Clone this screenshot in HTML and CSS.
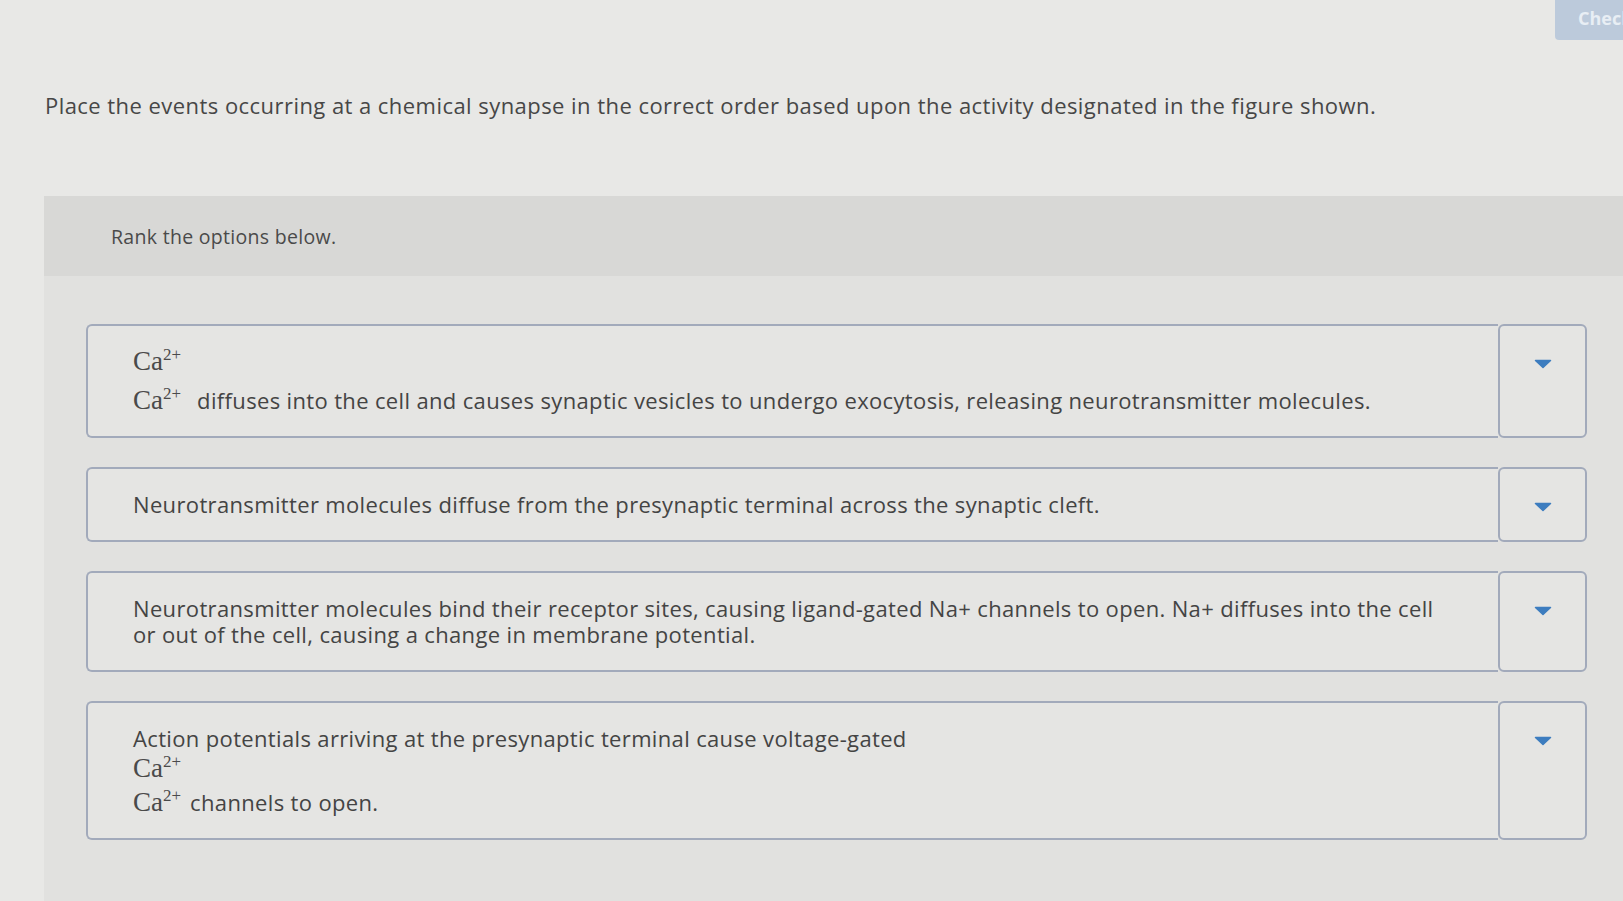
FILE: index.html
```html
<!DOCTYPE html>
<html lang="en">
<head>
    <meta charset="UTF-8">
    <meta name="viewport" content="width=device-width, initial-scale=1.0">
    <title>Ranking - Chemical Synapse</title>
    <link rel="stylesheet" href="styles.css">
</head>
<body>
    <header class="topbar">
        <button class="check-btn">Check</button>
    </header>

    <main class="question">
        <p class="prompt">Place the events occurring at a chemical synapse in the correct order based upon the activity designated in the figure shown.</p>

        <section class="ranking">
            <div class="ranking-head">Rank the options below.</div>

            <ol class="options">
                <li class="option">
                    <div class="option-text">
                        <span class="math-block"><span class="chem">Ca<sup>2+</sup></span></span>
                        <span class="chem">Ca<sup>2+</sup></span><span class="after-chem wide">diffuses into the cell and causes synaptic vesicles to undergo exocytosis, releasing neurotransmitter molecules.</span>
                    </div>
                    <div class="option-select">
                        <svg class="caret" width="18" height="10" viewBox="0 0 18 10"><path d="M1.5 1.5 H16.5 L9 8.5 Z"/></svg>
                    </div>
                </li>
                <li class="option">
                    <div class="option-text">Neurotransmitter molecules diffuse from the presynaptic terminal across the synaptic cleft.</div>
                    <div class="option-select">
                        <svg class="caret" width="18" height="10" viewBox="0 0 18 10"><path d="M1.5 1.5 H16.5 L9 8.5 Z"/></svg>
                    </div>
                </li>
                <li class="option">
                    <div class="option-text">Neurotransmitter molecules bind their receptor sites, causing ligand-gated Na+ channels to open. Na+ diffuses into the cell or out of the cell, causing a change in membrane potential.</div>
                    <div class="option-select">
                        <svg class="caret" width="18" height="10" viewBox="0 0 18 10"><path d="M1.5 1.5 H16.5 L9 8.5 Z"/></svg>
                    </div>
                </li>
                <li class="option">
                    <div class="option-text">
                        <span class="text-line">Action potentials arriving at the presynaptic terminal cause voltage-gated</span>
                        <span class="math-block"><span class="chem">Ca<sup>2+</sup></span></span>
                        <span class="chem">Ca<sup>2+</sup></span><span class="after-chem">channels to open.</span>
                    </div>
                    <div class="option-select">
                        <svg class="caret" width="18" height="10" viewBox="0 0 18 10"><path d="M1.5 1.5 H16.5 L9 8.5 Z"/></svg>
                    </div>
                </li>
            </ol>
        </section>
    </main>
</body>
</html>
```

FILE: styles.css
```css
:root {
    --page: #e8e8e6;
    --panel: #e1e1df;
    --panel-head: #d8d8d6;
    --card: #e5e5e3;
    --border: #a2aabb;
    --text: #444;
    --blue: #3d7dbf;
}

* {
    margin: 0;
    padding: 0;
    box-sizing: border-box;
}

body {
    background: var(--page);
    color: var(--text);
    font-family: 'Open Sans', 'Lato', sans-serif;
    overflow: hidden;
}

.topbar {
    display: flex;
    justify-content: flex-end;
    height: 41px;
}

.check-btn {
    width: 100px;
    height: 40px;
    margin-right: -32px;
    padding: 0 0 5px 23px;
    text-align: left;
    background: #bccadb;
    color: #e8eef4;
    border: none;
    border-radius: 0 0 0 4px;
    font-family: inherit;
    font-size: 18px;
    font-weight: 700;
}

.prompt {
    margin: 49px 0 76px;
    padding-left: 45px;
    font-size: 22px;
    letter-spacing: 0.45px;
    line-height: 30px;
    color: #474747;
}

.ranking {
    margin-left: 44px;
    background: var(--panel);
    padding-bottom: 120px;
}

.ranking-head {
    display: flex;
    align-items: center;
    height: 80px;
    padding-left: 67px;
    background: var(--panel-head);
    font-size: 19.5px;
    letter-spacing: 0.3px;
    color: #4a4a4a;
}

.options {
    list-style: none;
    display: flex;
    flex-direction: column;
    gap: 29px;
    padding: 48px 36px 0 42px;
}

.option {
    display: flex;
}

.option-text {
    flex: 1;
    padding: 22px 50px 23px 45px;
    background: var(--card);
    border: 2px solid var(--border);
    border-right: none;
    border-radius: 6px 0 0 6px;
    font-size: 22px;
    letter-spacing: 0.35px;
    line-height: 26px;
}

.option-select {
    width: 89px;
    padding-top: 33px;
    display: flex;
    justify-content: center;
    align-items: flex-start;
    background: var(--card);
    border: 2px solid var(--border);
    border-radius: 6px;
}

.caret path {
    fill: var(--blue);
    stroke: var(--blue);
    stroke-width: 1.5;
    stroke-linejoin: round;
}

.text-line,
.math-block {
    display: block;
}

.math-block {
    margin-bottom: 13px;
}

/* formula printed under a full text line needs a little air above it */
.text-line + .math-block {
    margin-top: 4px;
    margin-bottom: 8px;
}

.chem {
    font-family: 'Liberation Serif', 'Times New Roman', serif;
    font-size: 27px;
    letter-spacing: 0;
    color: #4a4a4a;
}

.chem sup {
    font-size: 17px;
    line-height: 0;
    vertical-align: 10px;
}

.after-chem {
    margin-left: 9px;
}

.after-chem.wide {
    margin-left: 16px;
}
```
